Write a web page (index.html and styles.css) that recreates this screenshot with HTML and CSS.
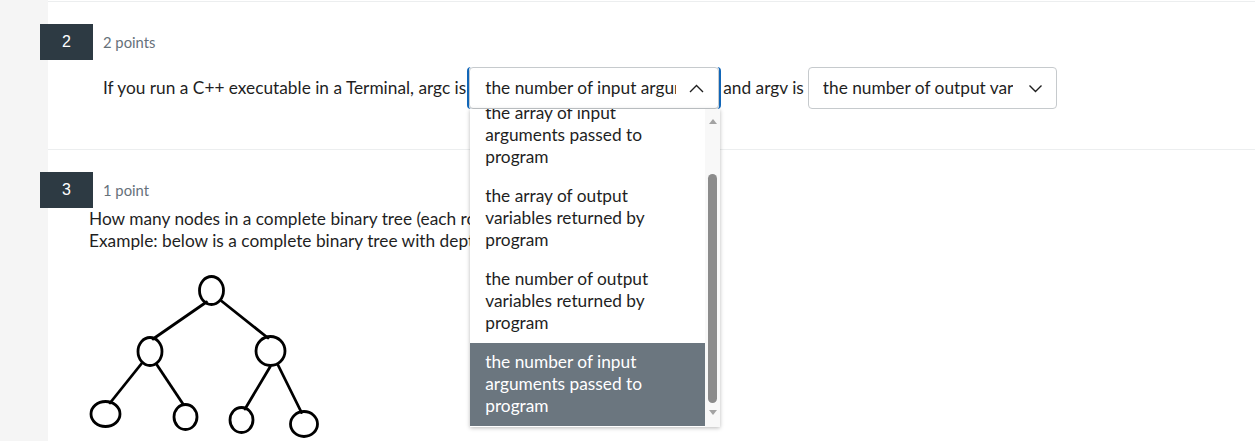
FILE: index.html
```html
<!DOCTYPE html>
<html lang="en">
<head>
<meta charset="utf-8">
<title>Quiz</title>
<link rel="stylesheet" href="styles.css">
</head>
<body>
<div class="page">
  <div class="gutter"></div>
  <main class="main">
    <div class="rule-top"></div>

    <section class="question q2">
      <div class="q-head">
        <span class="badge">2</span>
        <span class="points">2 points</span>
      </div>
      <div class="q-body inline">
        <span class="prompt">If you run a C++ executable in a Terminal, argc is</span>
        <div class="select-wrap is-open">
          <div class="select">
            <span class="select-value">the number of input arguments passed to program</span>
            <svg class="chev" width="15" height="9" viewBox="0 0 15 9"><path d="M1 8 L7.5 1.5 L14 8" fill="none" stroke="#1f1f1f" stroke-width="1.4"/></svg>
          </div>
          <div class="listbox">
            <div class="list-viewport">
              <ul class="options">
                <li class="option">the array of input arguments passed to program</li>
                <li class="option">the array of output variables returned by program</li>
                <li class="option">the number of output variables returned by program</li>
                <li class="option selected">the number of input arguments passed to program</li>
              </ul>
            </div>
            <div class="scrollbar">
              <div class="sb-btn sb-up"><span class="tri-up"></span></div>
              <div class="sb-track"><div class="sb-thumb"></div></div>
              <div class="sb-btn sb-down"><span class="tri-down"></span></div>
            </div>
          </div>
        </div>
        <span class="prompt mid">and argv is</span>
        <div class="select-wrap plain">
          <div class="select">
            <span class="select-value">the number of output variables returned by program</span>
            <svg class="chev" width="15" height="9" viewBox="0 0 15 9"><path d="M1.5 1.5 L7.5 7.5 L13.5 1.5" fill="none" stroke="#1f1f1f" stroke-width="1.4"/></svg>
          </div>
        </div>
      </div>
    </section>

    <section class="question q3">
      <div class="q-head">
        <span class="badge">3</span>
        <span class="points">1 point</span>
      </div>
      <div class="q-text">
        <p>How many nodes in a complete binary tree (each row is full) of depth 4?</p>
        <p>Example: below is a complete binary tree with depth 3.</p>
      </div>
      <svg class="tree" width="250" height="179" viewBox="0 0 250 179">
        <g fill="none" stroke="#000" stroke-width="2.8" stroke-linecap="round">
          <line x1="126.5" y1="39" x2="73" y2="76"/>
          <line x1="141.5" y1="38" x2="188" y2="75"/>
          <line x1="62" y1="100" x2="30" y2="140"/>
          <line x1="77" y1="102" x2="103" y2="141"/>
          <line x1="190" y1="104" x2="165" y2="146"/>
          <line x1="198" y1="102" x2="221.5" y2="149.5"/>
          <ellipse cx="131.5" cy="27.5" rx="12" ry="14"/>
          <ellipse cx="70" cy="88.5" rx="12" ry="14"/>
          <ellipse cx="190.5" cy="88" rx="14.5" ry="14.5"/>
          <ellipse cx="25.5" cy="151" rx="14.5" ry="12.5"/>
          <ellipse cx="105.5" cy="154" rx="11.5" ry="12.5"/>
          <ellipse cx="161.5" cy="157" rx="11.5" ry="12.5"/>
          <ellipse cx="224" cy="161" rx="13.5" ry="12.5"/>
        </g>
      </svg>
    </section>
  </main>
</div>
</body>
</html>
```

FILE: styles.css
```css
* { box-sizing: border-box; }

html, body {
  margin: 0;
  padding: 0;
  height: 100%;
}

body {
  background: #f5f5f5;
  font-family: Lato, "Open Sans", sans-serif;
  font-size: 17.3px;
  color: #1f1f1f;
  overflow: hidden;
}

.page {
  display: flex;
  min-height: 100%;
}

.gutter {
  width: 48px;
  flex: 0 0 48px;
}

.main {
  flex: 1;
  background: #fff;
  padding-top: 1px;
}

.rule-top {
  height: 1px;
  background: #eceeef;
}

.question {
  padding-top: 22px;
}

.q2 {
  padding-bottom: 40px;
  border-bottom: 1px solid #eceeef;
}

.q-head {
  display: flex;
  align-items: center;
  height: 36px;
}

.badge {
  width: 53px;
  height: 36px;
  margin-left: -8px;
  background: #2d3a43;
  color: #fff;
  font-family: "Liberation Sans", Arial, sans-serif;
  font-size: 16px;
  display: flex;
  align-items: center;
  justify-content: center;
}

.points {
  margin-left: 10px;
  font-size: 14.8px;
  color: #66717a;
}

.q-body.inline {
  display: flex;
  align-items: center;
  margin-top: 7px;
  padding-left: 55px;
  height: 42px;
}

.prompt {
  white-space: nowrap;
  line-height: 22px;
}

.prompt.mid {
  margin: 0 4px 0 2px;
}

.select-wrap {
  position: relative;
  height: 42px;
  flex: 0 0 auto;
}

.select-wrap.is-open {
  width: 254px;
  margin-left: 1px;
  border-left: 2px solid #1166b8;
  border-right: 2px solid #1166b8;
  border-radius: 4px;
}

.select-wrap.plain {
  width: 249px;
}

.select {
  height: 42px;
  border: 1px solid #c6cacd;
  border-radius: 4px;
  background: #fff;
  display: flex;
  align-items: center;
  padding-left: 14px;
  padding-right: 14px;
}

.select-value {
  flex: 0 0 190px;
  width: 190px;
  white-space: nowrap;
  overflow: hidden;
  line-height: 22px;
}

.is-open .select-value {
  flex-basis: 191px;
  width: 191px;
  margin-left: 1px;
}

.chev {
  margin-left: auto;
  display: block;
}

.plain .chev {
  margin-right: -1px;
}

/* open dropdown list */
.listbox {
  position: absolute;
  top: 42px;
  left: 1px;
  width: 250px;
  height: 318px;
  background: #fff;
  box-shadow: 0 1px 4px rgba(0, 0, 0, 0.28);
  display: flex;
  z-index: 5;
}

.list-viewport {
  flex: 1;
  overflow: hidden;
}

.options {
  list-style: none;
  margin: -15px 0 0;
  padding: 0;
}

.option {
  padding: 8px 28px 9px 15px;
  line-height: 22px;
  color: #1f1f1f;
}

.option.selected {
  background: #6b767f;
  color: #fff;
}

.scrollbar {
  width: 15px;
  flex: 0 0 15px;
  background: #f8f8f8;
  display: flex;
  flex-direction: column;
}

.sb-btn {
  display: flex;
  justify-content: center;
}

.sb-up {
  height: 26px;
  padding-top: 10px;
}

.sb-track {
  flex: 1;
  display: flex;
  justify-content: center;
}

.sb-thumb {
  margin-top: 39px;
  width: 9px;
  height: 229px;
  border-radius: 5px;
  background: #8b8b8b;
}

.sb-down {
  height: 22px;
  padding-top: 5px;
}

.tri-up {
  width: 0;
  height: 0;
  border-left: 4.5px solid transparent;
  border-right: 4.5px solid transparent;
  border-bottom: 5px solid #a3a3a3;
}

.tri-down {
  width: 0;
  height: 0;
  border-left: 4.5px solid transparent;
  border-right: 4.5px solid transparent;
  border-top: 5px solid #a3a3a3;
}

/* question 3 */
.q-text {
  margin-left: 41px;
  width: 630px;
}

.q-text p {
  margin: 0;
  line-height: 22px;
  white-space: nowrap;
}

.tree {
  display: block;
  margin-left: 32px;
  margin-top: 11px;
}
```
